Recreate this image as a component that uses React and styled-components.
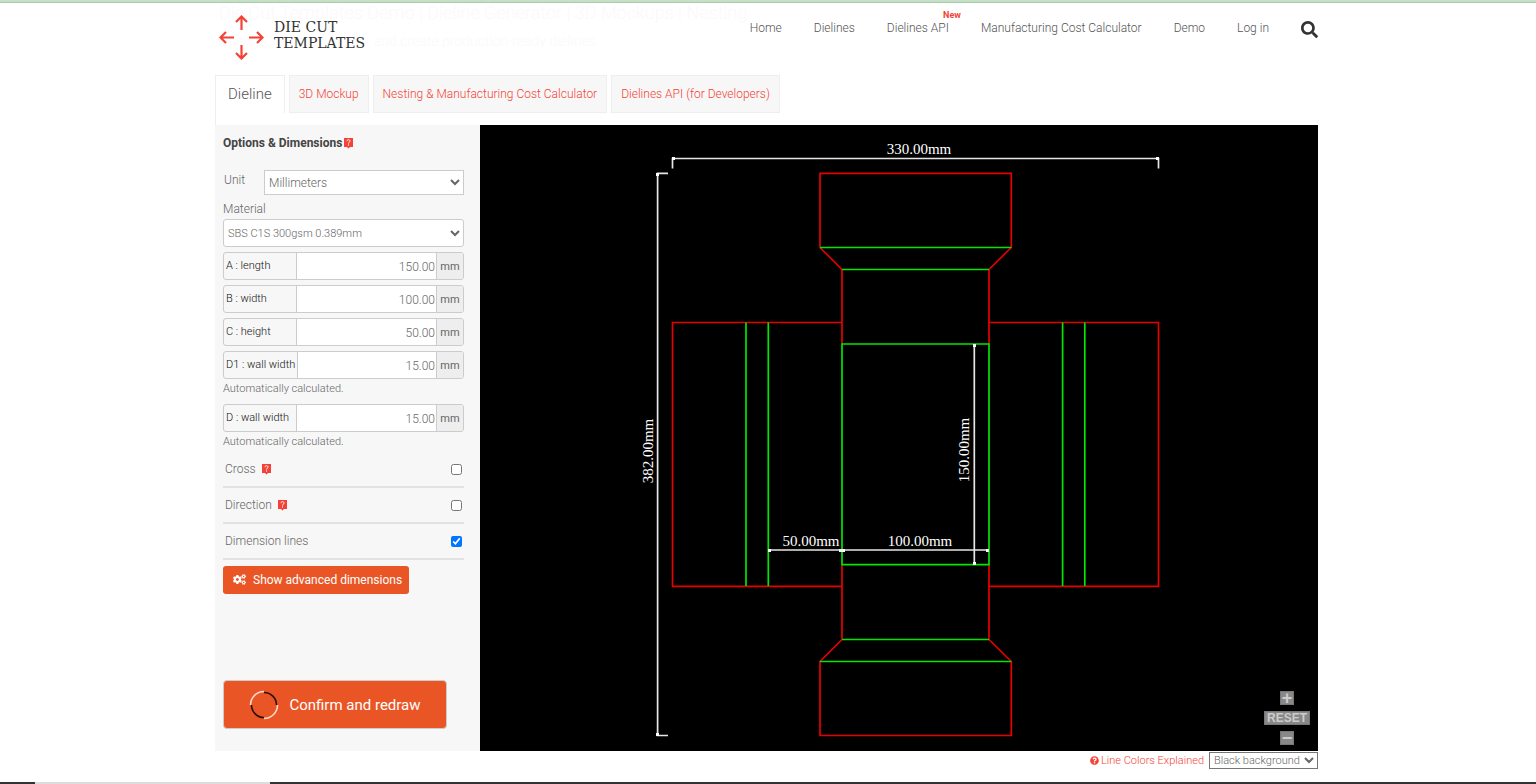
import React from "react";
import styled, { createGlobalStyle } from "styled-components";
import { FaSearch, FaQuestionCircle, FaCogs } from "react-icons/fa";

const GlobalStyle = createGlobalStyle`
  * {
    box-sizing: border-box;
  }
  body {
    margin: 0;
    background: #fff;
    color: #666;
    font-family: Roboto, sans-serif;
    font-weight: 300;
    font-size: 14px;
    line-height: 20px;
  }
  button, input, select {
    font: inherit;
    color: inherit;
  }
`;

const Page = styled.div`
  min-height: 100vh;
  display: flex;
  flex-direction: column;
  padding-right: 3px;
  position: relative;
`;
const TopLine = styled.div`
  height: 3px;
  margin-right: -3px;
  background: #c5e0c6;
  border-bottom: 1px solid #a9cbaa;
`;
const Container = styled.div`
  width: 100%;
  max-width: 1103px;
  margin: 0 auto;
`;
const Header = styled.header`
  display: flex;
  justify-content: space-between;
  height: 72px;
  position: relative;
`;
const Ghost = styled.div`
  position: absolute;
  left: 4px;
  top: 0;
  color: #fafafa;
  white-space: nowrap;
`;
const GhostTitle = styled.div`
  font-size: 18px;
  line-height: 20px;
`;
const GhostText = styled.div`
  display: flex;
  gap: 108px;
  padding-top: 8px;
  font-size: 14px;
  line-height: 20px;
`;
const Logo = styled.a`
  display: flex;
  gap: 10px;
  padding: 12px 4px 0;
  text-decoration: none;
  color: #333;
  position: relative;
`;
const LogoText = styled.span`
  padding-top: 4px;
  font-family: "DejaVu Serif", serif;
  font-size: 14px;
  font-weight: 400;
  line-height: 16px;
`;
const Nav = styled.nav`
  display: flex;
  gap: 32px;
  padding-top: 15px;
  position: relative;
`;
const NavLink = styled.a`
  position: relative;
  font-size: 12px;
  color: #555;
  text-decoration: none;
`;
const NewBadge = styled.span`
  position: absolute;
  right: -12px;
  top: -13px;
  font-size: 9px;
  font-weight: 700;
  color: #f44336;
`;
const SearchButton = styled.button`
  border: 0;
  padding: 3px 0 0;
  background: none;
  color: #333;
  height: 24px;
`;

const Tabs = styled.div`
  display: flex;
  gap: 4px;
  align-items: flex-start;
  height: 50px;
  border-left: 1px solid #eee;
`;
const Tab = styled.button`
  height: 38px;
  padding: 0 ${({ $active }) => ($active ? "12px" : "9px")} 1px;
  font-size: ${({ $active }) => ($active ? "15px" : "12px")};
  color: ${({ $active }) => ($active ? "#555" : "#f44336")};
  background: ${({ $active }) => ($active ? "#fff" : "#f7f7f7")};
  border: 1px solid #eee;
  ${({ $active }) => $active && "border-bottom: 0; border-left: 0;"}
`;

const Main = styled.main`
  display: flex;
`;
const Sidebar = styled.form`
  width: 265px;
  flex-shrink: 0;
  padding: 8px 16px 22px 8px;
  background: #f7f7f7;
  display: flex;
  flex-direction: column;
`;
const Heading = styled.h2`
  display: flex;
  align-items: center;
  gap: 2px;
  margin: 0 0 17px;
  font-size: 12px;
  font-weight: 700;
  line-height: 20px;
  color: #444;
`;
const UnitRow = styled.div`
  display: flex;
  justify-content: space-between;
  padding-left: 1px;
  margin-bottom: 4px;
`;
const Label = styled.label`
  display: flex;
  align-items: center;
  gap: 6px;
  height: 20px;
  font-size: 12px;
`;
const Select = styled.select`
  height: ${({ $tall }) => ($tall ? "28px" : "25px")};
  width: ${({ $tall }) => ($tall ? "100%" : "200px")};
  padding: 0;
  border: 1px solid #ccc;
  border-radius: ${({ $tall }) => ($tall ? "3px" : "0")};
  background: #fff;
  font-size: ${({ $tall }) => ($tall ? "11px" : "12px")};
`;
const Field = styled.div`
  display: flex;
  height: 28px;
  margin-top: 5px;
  border: 1px solid #ccc;
  border-radius: 3px;
  overflow: hidden;
  flex-shrink: 0;
`;
const FieldLabel = styled.label`
  min-width: 73px;
  padding: 0 2px;
  border-right: 1px solid #ccc;
  font-size: 11px;
  line-height: 26px;
  color: #111;
  white-space: nowrap;
`;
const FieldInput = styled.input`
  flex: 1;
  min-width: 0;
  border: 0;
  padding: 1px 1px 0;
  text-align: right;
  font-size: 12px;
  background: #fff;
`;
const FieldUnit = styled.span`
  width: 27px;
  border-left: 1px solid #ccc;
  background: #eee;
  text-align: center;
  font-size: 11px;
  font-weight: 400;
  line-height: 28px;
`;
const Hint = styled.p`
  margin: 0;
  font-size: 11px;
  line-height: 20px;
`;
const CheckRow = styled.div`
  display: flex;
  justify-content: space-between;
  align-items: center;
  height: 36px;
  padding: 0 1px 0 2px;
  border-bottom: 2px solid #e2e2e2;
`;
const Checkbox = styled.input`
  width: 11px;
  height: 11px;
  margin: 0 1px;
`;
const AdvancedButton = styled.button`
  display: flex;
  align-items: center;
  gap: 7px;
  align-self: flex-start;
  height: 28px;
  margin-top: 6px;
  padding: 0 7px 1px 10px;
  border: 0;
  border-radius: 3px;
  background: #ea5525;
  color: #fff;
  font-size: 12px;
  font-weight: 400;
`;
const ConfirmButton = styled.button`
  display: flex;
  align-items: center;
  justify-content: center;
  gap: 10px;
  width: 224px;
  height: 49px;
  margin-top: auto;
  border: 1px solid #ccc;
  border-radius: 4px;
  background: #ea5525;
  color: #fff;
  font-size: 15px;
  font-weight: 400;
`;

const Viewer = styled.section`
  flex: 1;
  min-width: 0;
  position: relative;
  background: #000;
`;
const Drawing = styled.svg`
  display: block;
  width: 100%;
  height: auto;
`;
const ZoomControls = styled.div`
  position: absolute;
  right: 8px;
  bottom: 6px;
  display: flex;
  flex-direction: column;
  align-items: center;
  gap: 6px;
`;
const ZoomButton = styled.button`
  height: 14px;
  min-width: 14px;
  padding: 0 ${({ $wide }) => ($wide ? "2px" : "0")};
  display: flex;
  align-items: center;
  justify-content: center;
  border: 1px solid #777;
  background: #888;
  color: #ccc;
  font-family: "Liberation Sans", sans-serif;
  font-size: ${({ $wide }) => ($wide ? "12px" : "18px")};
  font-weight: 700;
  line-height: 12px;
`;
const Footer = styled.footer`
  display: flex;
  justify-content: flex-end;
  align-items: center;
  gap: 5px;
  padding-top: 1px;
`;
const ColorsLink = styled.a`
  display: flex;
  align-items: center;
  gap: 2px;
  font-size: 11px;
  line-height: 17px;
  color: #f44336;
  text-decoration: none;
`;
const BackgroundSelect = styled.select`
  width: 109px;
  height: 17px;
  padding: 0;
  border: 1px solid #767676;
  background: #fff;
  font-size: 11px;
  line-height: 15px;
`;
const BottomLine = styled.div`
  display: flex;
  height: 2px;
  margin: auto -3px 0 0;
  background: #333;
`;
const BottomGap = styled.div`
  width: 235px;
  margin-left: 35px;
  background: #ddd;
`;

const LogoMark = () => (
  <svg width="45" height="45" viewBox="0 0 45 45" fill="none" stroke="#f44336" strokeWidth="2.2">
    <path d="M22.5 15V1.500M17 7l5.500-5.500L28 7M22.500 30v13.500M17 38l5.500 5.500L28 38M15 22.500H1.500M7 17l-5.500 5.500L7 28M30 22.500h13.500M38 17l5.500 5.500L38 28" />
  </svg>
);

const HelpMark = () => (
  <svg width="9" height="11" viewBox="0 0 9 11" role="img" aria-label="Help">
    <path d="M0 0h9v9H6L4.500 10.500 3 9H0z" fill="#f44336" />
    <path d="M3 3.200C3 1.200 6 1.200 6 3.100 6 4.200 4.500 4.200 4.500 5.600M4.500 6.400v1.200" stroke="#fff" fill="none" />
  </svg>
);

const Spinner = () => (
  <svg width="30" height="30" viewBox="0 0 30 30" fill="none" strokeWidth="1.6">
    <path d="M1.500 15A13.500 13.500 0 0 1 15 1.500M28.500 15A13.500 13.500 0 0 1 15 28.500" stroke="#fbd9cd" />
    <path d="M15 2.500A12.500 12.500 0 0 1 27.500 15M15 27.500A12.500 12.500 0 0 1 2.500 15" stroke="#2b1008" />
  </svg>
);

const Dieline = () => (
  <Drawing viewBox="0 0 838 626" role="img" aria-label="Dieline drawing">
    <g fill="none" stroke="#e60000" strokeWidth="1.7">
      <path d="M340 122.500V48.300H531.300V122.500L509 144.500V219M340 122.500L362 144.500V219" />
      <path d="M362 197.500H192.500V461.300H362M509 197.500H678.500V461.300H509" />
      <path d="M362 440V514.500L340 536.500V610.500H531.300V536.500L509 514.500V440" />
    </g>
    <g fill="none" stroke="#00e600" strokeWidth="1.7">
      <path d="M340 122.500H531.300M362 144.500H509M362 514.500H509M340 536.500H531.300" />
      <path d="M266 197.500V461M288.300 197.500V461M582.600 197.500V461M604.800 197.500V461" />
      <path d="M362 219H509V439.700H362z" />
    </g>
    <g fill="none" stroke="#e6e6e6" strokeWidth="1.7">
      <path d="M192.500 43.500V33.500H678.500V43.500M188 48.300H177.600V610.500H188" />
      <path d="M494.300 219V439.700M288.300 425H509" />
    </g>
    <g fill="#fff">
      <path d="M192 32h3v3h-3zM676 32h3v3h-3zM176 48h3v3h-3zM176 608h3v3h-3zM493 219h3v3h-3zM493 437h3v3h-3zM288 424h3v3h-3zM359 424h6v3h-6zM506 424h3v3h-3z" />
    </g>
    <g fill="#fff" fontFamily="Liberation Serif, serif" fontSize="15" fontWeight="400" textAnchor="middle">
      <text x="439" y="29">330.00mm</text>
      <text x="440" y="421">100.00mm</text>
      <text x="331" y="421">50.00mm</text>
      <text transform="translate(173 326) rotate(-90)">382.00mm</text>
      <text transform="translate(489 325) rotate(-90)">150.00mm</text>
    </g>
  </Drawing>
);

const DimensionField = ({ id, label, value }) => (
  <Field>
    <FieldLabel htmlFor={id}>{label}</FieldLabel>
    <FieldInput id={id} defaultValue={value} />
    <FieldUnit>mm</FieldUnit>
  </Field>
);

const Option = ({ id, label, help, checked }) => (
  <CheckRow>
    <Label htmlFor={id}>
      {label}
      {help && <HelpMark />}
    </Label>
    <Checkbox type="checkbox" id={id} defaultChecked={checked} />
  </CheckRow>
);

const App = () => (
  <>
    <GlobalStyle />
    <Page>
      <TopLine />
      <Container>
        <Header>
          <Ghost aria-hidden="true">
            <GhostTitle>Die Cut Templates Demo | Dieline Generator | 3D Mockups | Nesting</GhostTitle>
            <GhostText>
              <span>Change</span>
              <span>and create production-ready dielines</span>
            </GhostText>
          </Ghost>
          <Logo href="#">
            <LogoMark />
            <LogoText>
              DIE CUT
              <br />
              TEMPLATES
            </LogoText>
          </Logo>
          <Nav>
            <NavLink href="#">Home</NavLink>
            <NavLink href="#">Dielines</NavLink>
            <NavLink href="#">
              Dielines API<NewBadge>New</NewBadge>
            </NavLink>
            <NavLink href="#">Manufacturing Cost Calculator</NavLink>
            <NavLink href="#">Demo</NavLink>
            <NavLink href="#">Log in</NavLink>
            <SearchButton aria-label="Search">
              <FaSearch size={17} />
            </SearchButton>
          </Nav>
        </Header>

        <Tabs>
          <Tab $active>Dieline</Tab>
          <Tab>3D Mockup</Tab>
          <Tab>Nesting &amp; Manufacturing Cost Calculator</Tab>
          <Tab>Dielines API (for Developers)</Tab>
        </Tabs>

        <Main>
          <Sidebar>
            <Heading>
              Options &amp; Dimensions <HelpMark />
            </Heading>
            <UnitRow>
              <Label htmlFor="unit">Unit</Label>
              <Select id="unit">
                <option>Millimeters</option>
              </Select>
            </UnitRow>
            <Label htmlFor="material">Material</Label>
            <Select id="material" $tall>
              <option>SBS C1S 300gsm 0.389mm</option>
            </Select>
            <DimensionField id="a" label="A : length" value="150.00" />
            <DimensionField id="b" label="B : width" value="100.00" />
            <DimensionField id="c" label="C : height" value="50.00" />
            <DimensionField id="d1" label="D1 : wall width" value="15.00" />
            <Hint>Automatically calculated.</Hint>
            <DimensionField id="d" label="D : wall width" value="15.00" />
            <Hint>Automatically calculated.</Hint>
            <Option id="cross" label="Cross" help />
            <Option id="direction" label="Direction" help />
            <Option id="lines" label="Dimension lines" checked />
            <AdvancedButton type="button">
              <FaCogs size={13} />
              Show advanced dimensions
            </AdvancedButton>
            <ConfirmButton type="button">
              <Spinner />
              Confirm and redraw
            </ConfirmButton>
          </Sidebar>
          <Viewer>
            <Dieline />
            <ZoomControls>
              <ZoomButton aria-label="Zoom in">+</ZoomButton>
              <ZoomButton $wide>RESET</ZoomButton>
              <ZoomButton aria-label="Zoom out">−</ZoomButton>
            </ZoomControls>
          </Viewer>
        </Main>

        <Footer>
          <ColorsLink href="#">
            <FaQuestionCircle size={9} />
            Line Colors Explained
          </ColorsLink>
          <BackgroundSelect aria-label="Background">
            <option>Black background</option>
          </BackgroundSelect>
        </Footer>
      </Container>
      <BottomLine>
        <BottomGap />
      </BottomLine>
    </Page>
  </>
);

export default App;
